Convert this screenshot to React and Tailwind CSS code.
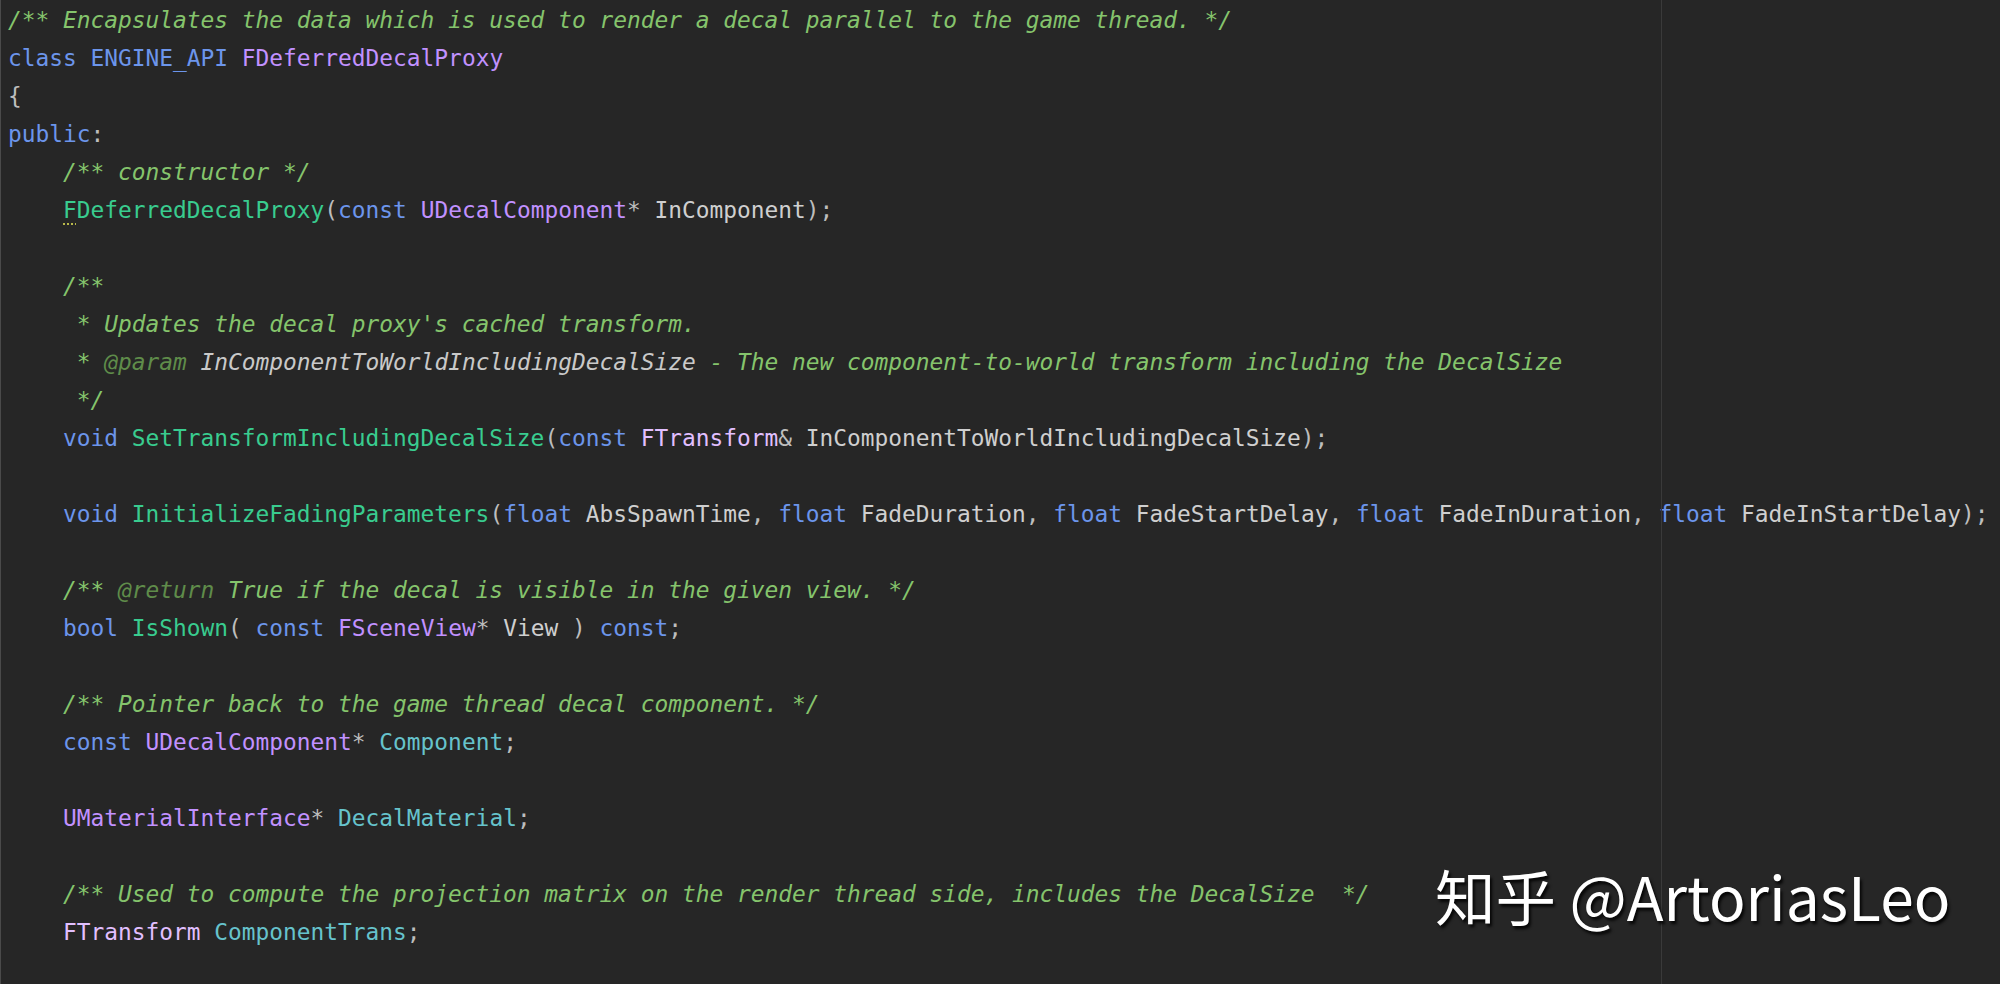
const C = {
  cm: "text-[#85c46c] italic",
  tag: "text-[#5f8c4a] italic",
  cid: "text-[#c9c9c9] italic",
  kw: "text-[#6c95eb]",
  cls: "text-[#c191ff]",
  st: "text-[#e1bfff]",
  fn: "text-[#39cc8f]",
  fld: "text-[#66c3cc]",
  tx: "text-[#bdbdbd]",
  pm: "text-[#cfcfcf]",
};

const lines = [
  [["/** Encapsulates the data which is used to render a decal parallel to the game thread. */", "cm"]],
  [["class ", "kw"], ["ENGINE_API ", "kw"], ["FDeferredDecalProxy", "cls"]],
  [["{", "tx"]],
  [["public", "kw"], [":", "tx"]],
  [["    ", "tx"], ["/** constructor */", "cm"]],
  [["    ", "tx"], ["F", "ctor"], ["DeferredDecalProxy", "fn"], ["(", "tx"], ["const ", "kw"], ["UDecalComponent", "cls"], ["* ", "tx"], ["InComponent", "pm"], [");", "tx"]],
  [],
  [["    /**", "cm"]],
  [["     * Updates the decal proxy's cached transform.", "cm"]],
  [["     * ", "cm"], ["@param", "tag"], [" ", "cm"], ["InComponentToWorldIncludingDecalSize", "cid"], [" - The new component-to-world transform including the DecalSize", "cm"]],
  [["     */", "cm"]],
  [["    ", "tx"], ["void ", "kw"], ["SetTransformIncludingDecalSize", "fn"], ["(", "tx"], ["const ", "kw"], ["FTransform", "st"], ["& ", "tx"], ["InComponentToWorldIncludingDecalSize", "pm"], [");", "tx"]],
  [],
  [["    ", "tx"], ["void ", "kw"], ["InitializeFadingParameters", "fn"], ["(", "tx"],
    ["float ", "kw"], ["AbsSpawnTime", "pm"], [", ", "tx"],
    ["float ", "kw"], ["FadeDuration", "pm"], [", ", "tx"],
    ["float ", "kw"], ["FadeStartDelay", "pm"], [", ", "tx"],
    ["float ", "kw"], ["FadeInDuration", "pm"], [", ", "tx"],
    ["float ", "kw"], ["FadeInStartDelay", "pm"], [");", "tx"]],
  [],
  [["    /** ", "cm"], ["@return", "tag"], [" True if the decal is visible in the given view. */", "cm"]],
  [["    ", "tx"], ["bool ", "kw"], ["IsShown", "fn"], ["( ", "tx"], ["const ", "kw"], ["FSceneView", "cls"], ["* ", "tx"], ["View", "pm"], [" ) ", "tx"], ["const", "kw"], [";", "tx"]],
  [],
  [["    /** Pointer back to the game thread decal component. */", "cm"]],
  [["    ", "tx"], ["const ", "kw"], ["UDecalComponent", "cls"], ["* ", "tx"], ["Component", "fld"], [";", "tx"]],
  [],
  [["    ", "tx"], ["UMaterialInterface", "cls"], ["* ", "tx"], ["DecalMaterial", "fld"], [";", "tx"]],
  [],
  [["    /** Used to compute the projection matrix on the render thread side, includes the DecalSize  */", "cm"]],
  [["    ", "tx"], ["FTransform", "st"], [" ", "tx"], ["ComponentTrans", "fld"], [";", "tx"]],
];

function Token({ text, kind }) {
  if (kind === "ctor") {
    return (
      <span className="text-[#39cc8f] underline decoration-dotted decoration-[#b8b84a] decoration-2 underline-offset-[5px]">
        {text}
      </span>
    );
  }
  return <span className={C[kind]}>{text}</span>;
}

export default function App() {
  return (
    <div className="relative flex w-[2000px] h-[984px] overflow-hidden bg-[#262626]">
      <div className="w-px bg-[#4a4a4a]" />
      <pre className="pt-[1px] pl-[7px] font-['DejaVu_Sans_Mono',monospace] text-[22.85px] leading-[38px] whitespace-pre">
        {lines.map((line, i) => (
          <div key={i} className="h-[38px]">
            {line.map(([text, kind], j) => (
              <Token key={j} text={text} kind={kind} />
            ))}
          </div>
        ))}
      </pre>
      {/* right margin guide */}
      <div className="absolute top-0 bottom-0 left-[1661px] w-px bg-[#3a3a3a]" />
      {/* watermark */}
      <div className="absolute left-[1435px] top-[865px] text-[60.5px] leading-none text-white font-['Noto_Sans_CJK_SC','Noto_Sans',sans-serif] [text-shadow:2px_3px_3px_rgba(0,0,0,0.85)] whitespace-nowrap">
        知乎 @ArtoriasLeo
      </div>
    </div>
  );
}
